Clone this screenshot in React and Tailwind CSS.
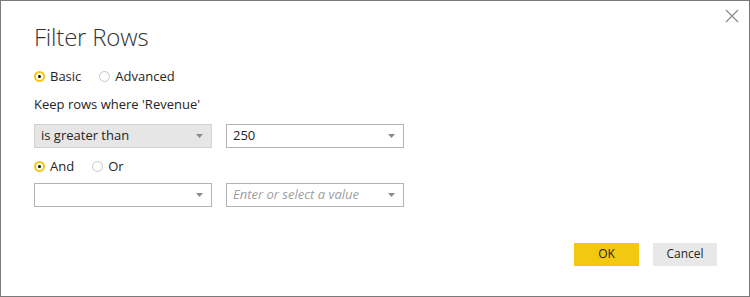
function Radio({ checked, label }) {
    return (
        <label className="flex items-center gap-[5px]">
            <span
                className={`w-[11px] h-[11px] rounded-full border flex items-center justify-center ${
                    checked ? 'border-[#f2c811] border-2' : 'border-[#c8c8c8]'
                }`}
            >
                {checked && <span className="w-[3px] h-[3px] rounded-full bg-black" />}
            </span>
            <span className="text-[13px] text-[#252423]">{label}</span>
        </label>
    );
}

function Caret() {
    return (
        <svg width="7" height="4" viewBox="0 0 7 4" className="shrink-0">
            <path d="M0 0 L7 0 L3.5 4 Z" fill="#8a8a8a" />
        </svg>
    );
}

function Select({ value, placeholder, filled }) {
    return (
        <div
            className={`w-[178px] h-[24px] border flex items-center justify-between pl-[6px] pr-[8px] ${
                filled ? 'bg-[#e6e6e6] border-[#d2d2d2]' : 'bg-white border-[#b4b4b4]'
            }`}
        >
            {value ? (
                <span className="text-[13px] text-[#252423]">{value}</span>
            ) : (
                <span className="text-[13px] italic text-[#a0a0a0]">{placeholder}</span>
            )}
            <Caret />
        </div>
    );
}

export default function App() {
    return (
        <div
            className="relative w-[750px] h-[297px] bg-white border border-[#7a7a7a] overflow-hidden"
            style={{ fontFamily: '"Open Sans", "Noto Sans", sans-serif' }}
        >
            {/* Close */}
            <svg
                className="absolute right-[10px] top-[8px]"
                width="14"
                height="14"
                viewBox="0 0 14 14"
            >
                <path d="M1 1 L13 13 M13 1 L1 13" stroke="#8a8a8a" strokeWidth="1.2" />
            </svg>

            <div className="flex flex-col pl-[33px] pt-[18px]">
                <h1 className="text-[24px] font-light text-[#333] leading-[36px] tracking-[-0.2px]">Filter Rows</h1>

                <div className="flex items-center gap-[18px] mt-[12px]">
                    <Radio checked label="Basic" />
                    <Radio label="Advanced" />
                </div>

                <p className="text-[13px] text-[#252423] mt-[8px]">Keep rows where 'Revenue'</p>

                <div className="flex gap-[14px] mt-[10px]">
                    <Select filled value="is greater than" />
                    <Select value="250" />
                </div>

                <div className="flex items-center gap-[18px] mt-[9px]">
                    <Radio checked label="And" />
                    <Radio label="Or" />
                </div>

                <div className="flex gap-[14px] mt-[6px]">
                    <Select value="" />
                    <Select placeholder="Enter or select a value" />
                </div>

                <div className="flex justify-end gap-[14px] pr-[32px] mt-[36px]">
                    <button className="w-[65px] h-[23px] bg-[#f2c811] text-[12px] text-[#252423]">OK</button>
                    <button className="w-[64px] h-[23px] bg-[#e8e8e8] text-[12px] text-[#252423]">Cancel</button>
                </div>
            </div>
        </div>
    );
}
